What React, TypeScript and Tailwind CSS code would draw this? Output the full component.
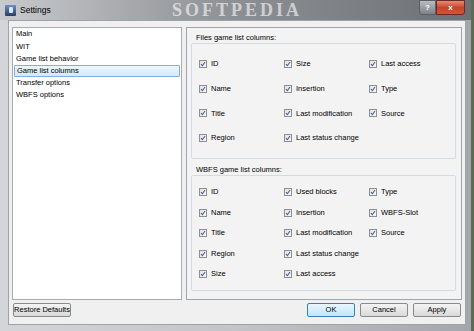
import React from 'react';

const font = { fontFamily: '"Liberation Sans", Arial, sans-serif' };

const filesColumns: string[][] = [
  ['ID', 'Size', 'Last access'],
  ['Name', 'Insertion', 'Type'],
  ['Title', 'Last modification', 'Source'],
  ['Region', 'Last status change', ''],
];

const wbfsColumns: string[][] = [
  ['ID', 'Used blocks', 'Type'],
  ['Name', 'Insertion', 'WBFS-Slot'],
  ['Title', 'Last modification', 'Source'],
  ['Region', 'Last status change', ''],
  ['Size', 'Last access', ''],
];

const pages = ['Main', 'WIT', 'Game list behavior', 'Game list columns', 'Transfer options', 'WBFS options'];

function CheckBox({ label }: { label: string }) {
  if (!label) return <div />;
  return (
    <div className="flex items-center gap-[4px] h-[10px]">
      <span className="w-[8px] h-[8px] border border-[#8e8f8f] bg-gradient-to-br from-[#dfe3ea] to-[#f6f7f9] flex items-center justify-center">
        <svg width="6" height="6" viewBox="0 0 6 6">
          <path d="M1 3.2 L2.4 4.7 L5 1" fill="none" stroke="#4b5f8f" strokeWidth="1.1" />
        </svg>
      </span>
      <span className="text-[7.5px] leading-none text-black whitespace-nowrap">{label}</span>
    </div>
  );
}

function ColumnGroup({ rows, gap, pt }: { rows: string[][]; gap: string; pt: string }) {
  return (
    <div className={`border border-[#d5dbe2] rounded-[2px] h-full flex flex-col pl-[7px] ${gap} ${pt}`}>
      {rows.map((r, i) => (
        <div key={i} className="grid grid-cols-[85px_85px_1fr]">
          {r.map((c, j) => (
            <CheckBox key={j} label={c} />
          ))}
        </div>
      ))}
    </div>
  );
}

function Button({ children, primary, w = 'w-[48px]' }: { children: React.ReactNode; primary?: boolean; w?: string }) {
  return (
    <button
      className={`${w} h-[14px] rounded-[2px] border text-[7.5px] leading-none text-black flex items-center justify-center ${
        primary
          ? 'border-[#3c7fb1] bg-gradient-to-b from-[#eaf6fd] to-[#bee6fd]'
          : 'border-[#8a8a8a] bg-gradient-to-b from-[#f4f4f4] to-[#d9d9d9]'
      }`}
    >
      {children}
    </button>
  );
}

export default function App() {
  return (
    <div className="w-[474px] h-[331px] relative overflow-hidden bg-[#5d6b52]" style={font}>
      <div className="w-[471px] h-full flex flex-col bg-gradient-to-r from-[#d3d5d8] via-[#c2c4c8] to-[#a3a6aa]">
        {/* title bar */}
        <div className="h-[20px] relative flex items-center bg-gradient-to-r from-[#c8cacd] via-[#8c8f93] to-[#6d7074] overflow-hidden">
          <div className="ml-[5px] w-[11px] h-[11px] rounded-[1px] bg-gradient-to-b from-[#6c8fc4] to-[#2a3e63] flex items-center justify-center">
            <div className="w-[4px] h-[6px] bg-[#dce6f4] rounded-[1px]" />
          </div>
          <span className="ml-[4px] text-[8.5px] text-black">Settings</span>
          <span
            className="absolute left-[172px] top-[1px] text-[18px] leading-[18px] font-bold tracking-[3px] text-white/60"
            style={{ fontFamily: '"Liberation Serif", serif' }}
          >
            SOFTPEDIA
          </span>
          <div className="absolute right-[6px] top-0 flex">
            <div className="w-[17px] h-[15px] rounded-bl-[3px] border border-[#5a5d61] bg-gradient-to-b from-[#b9bcc0] to-[#7f8387] flex items-center justify-center text-[8px] font-bold text-white">
              ?
            </div>
            <div className="w-[29px] h-[15px] rounded-br-[3px] border border-[#6b2a22] bg-gradient-to-b from-[#e58a77] via-[#c8432c] to-[#d2533a] flex items-center justify-center text-[8px] font-bold text-white">
              x
            </div>
          </div>
        </div>

        {/* client */}
        <div className="ml-[8px] mr-[5px] h-[305px] bg-[#f0f0f0] border border-[#9ea3a8] flex flex-col px-[3px] pt-[6px] pb-[6px]">
          <div className="flex gap-[4px] h-[273px]">
            <div className="w-[170px] h-full bg-white border border-[#a5acb5] flex flex-col">
              {pages.map((p) => (
                <div
                  key={p}
                  className={`h-[12.2px] flex items-center text-[7.5px] leading-none text-black ${
                    p === 'Game list columns'
                      ? 'mx-[1px] pl-[2px] border border-[#84acdd] bg-gradient-to-b from-[#eef5fd] to-[#d6e7fb] rounded-[1px]'
                      : 'pl-[3px]'
                  }`}
                >
                  {p}
                </div>
              ))}
            </div>
            <div className="flex-1 h-full border border-[#a0a6ad] bg-[#f3f3f3] flex flex-col pl-[4px] pr-[5px] pt-[5px] pb-[8px]">
              <div className="h-[10px] flex items-center text-[7.5px] leading-none text-black pl-[5px]">Files game list columns:</div>
              <div className="h-[116px]">
                <ColumnGroup rows={filesColumns} gap="gap-[14.7px]" pt="pt-[15px]" />
              </div>
              <div className="h-[10px] mt-[6px] flex items-center text-[7.5px] leading-none text-black pl-[5px]">WBFS game list columns:</div>
              <div className="flex-1">
                <ColumnGroup rows={wbfsColumns} gap="gap-[10.5px]" pt="pt-[11px]" />
              </div>
            </div>
          </div>
          <div className="flex items-center mt-[3px] pl-[1px] pr-[1px]">
            <Button w="w-[58px]">Restore Defaults</Button>
            <div className="flex-1" />
            <div className="flex gap-[5px]">
              <Button primary>OK</Button>
              <Button>Cancel</Button>
              <Button>Apply</Button>
            </div>
          </div>
        </div>
      </div>
    </div>
  );
}
